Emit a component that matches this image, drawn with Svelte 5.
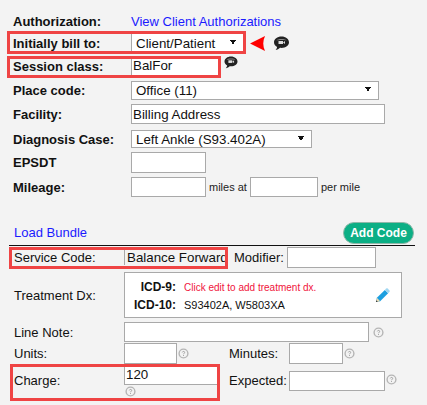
<script lang="ts">
  let initiallyBill = $state('Client/Patient');
  let placeCode = $state('Office (11)');
  let diagnosisCase = $state('Left Ankle (S93.402A)');
</script>

{#snippet help()}
  <svg class="help" viewBox="0 0 12 12" aria-hidden="true">
    <circle cx="6" cy="6" r="4.8" fill="#f3f3f3" stroke="#b5b5b5" stroke-width="1.5" />
    <path d="M4.7 4.8c.2-1.4 2.6-1.4 2.6 0 0 1-1.3 1-1.3 2" fill="none" stroke="#999" stroke-width="1" />
    <rect x="5.5" y="7.6" width="1" height="1" fill="#999" />
  </svg>
{/snippet}

{#snippet bubble(cls)}
  <svg class={cls} viewBox="0 0 16 15" aria-hidden="true">
    <path d="M8 .5C3.8.5.5 3 .5 6.300c0 2 1.200 3.700 3.100 4.700-.2 1.200-.8 2.300-1.600 3 1.800-.2 3.400-1 4.500-2.200.5.1 1 .1 1.500.1 4.200 0 7.500-2.500 7.500-5.600S12.200.5 8 .5z" fill="#222" />
    <path d="M3 4.500C4 2.500 12 2.500 13 4.500 11 3.700 5 3.700 3 4.500z" fill="#8a8a8a" />
    <rect x="5" y="5" width="4.500" height="3" fill="#ddd" />
    <path d="M9.500 6.500 11.500 5v3z" fill="#ddd" />
  </svg>
{/snippet}

<div class="page">
  <section class="top">
    <div class="row auth">
      <span class="label">Authorization:</span>
      <a href="#auth">View Client Authorizations</a>
    </div>

    <div class="row bill">
      <span class="label">Initially bill to:</span>
      <select class="sel-bill" bind:value={initiallyBill}>
        <option>Client/Patient</option>
      </select>
      <svg class="arrow" viewBox="0 0 17 16" aria-hidden="true">
        <path d="M0 8 16 0c-2.500 5-2.500 11 0 16z" fill="#f00" />
      </svg>
      {@render bubble('bubble-big')}
      <span class="mark mark-bill"></span>
    </div>

    <div class="row session">
      <span class="label">Session class:</span>
      <span class="value">BalFor</span>
      {@render bubble('bubble-small')}
      <span class="mark mark-session"></span>
    </div>

    <div class="row place">
      <span class="label">Place code:</span>
      <select class="sel-place" bind:value={placeCode}>
        <option>Office (11)</option>
      </select>
    </div>

    <div class="row facility">
      <span class="label">Facility:</span>
      <input class="in-facility" value="Billing Address" />
    </div>

    <div class="row diagnosis">
      <span class="label">Diagnosis Case:</span>
      <select class="sel-diagnosis" bind:value={diagnosisCase}>
        <option>Left Ankle (S93.402A)</option>
      </select>
    </div>

    <div class="row epsdt">
      <span class="label">EPSDT</span>
      <input class="in-short" />
    </div>

    <div class="row mileage">
      <span class="label">Mileage:</span>
      <input class="in-short" />
      <span class="small">miles at</span>
      <input class="in-rate" />
      <span class="small">per mile</span>
    </div>
  </section>

  <div class="bundle">
    <a href="#bundle">Load Bundle</a>
    <button type="button">Add Code</button>
  </div>

  <section class="lines">
    <div class="line service">
      <span class="name">Service Code:</span>
      <span class="code">Balance Forward</span>
      <span class="modifier">Modifier:</span>
      <input class="in-modifier" />
      <span class="mark mark-service"></span>
    </div>

    <div class="line dx">
      <span class="name">Treatment Dx:</span>
      <div class="dx-box">
        <div class="dx-row">
          <b>ICD-9:</b>
          <span class="dx-warn">Click edit to add treatment dx.</span>
        </div>
        <div class="dx-row">
          <b>ICD-10:</b>
          <span class="dx-codes">S93402A, W5803XA</span>
        </div>
        <svg class="pencil" viewBox="0 0 16 16" aria-hidden="true">
          <path d="M1 15l1-4.500L10.500 2 14 5.500 5.500 14z" fill="#1c9fe0" />
          <path d="M10.500 2 12 .6c.5-.4 1-.4 1.500 0l2 2c.4.5.4 1 0 1.500L14 5.500z" fill="#9fd6f2" />
          <path d="M1 15l1-4.500L5.500 14z" fill="#edd9b0" />
          <path d="M1 15l.4-2L3 14.600z" fill="#333" />
        </svg>
      </div>
    </div>

    <div class="line note">
      <span class="name">Line Note:</span>
      <input class="in-note" />
      {@render help()}
    </div>

    <div class="line units">
      <span class="name">Units:</span>
      <input class="in-units" />
      {@render help()}
      <span class="side">Minutes:</span>
      <input class="in-minutes" />
      {@render help()}
    </div>

    <div class="line charge">
      <span class="name">Charge:</span>
      <div class="charge-field">
        <input class="in-charge" value="120" />
        {@render help()}
      </div>
      <span class="side">Expected:</span>
      <input class="in-expected" />
      {@render help()}
      <span class="mark mark-charge"></span>
    </div>
  </section>
</div>

<style>
  :global(body) {
    margin: 0;
    background: #f3f3f3;
  }

  .page {
    width: 427px;
    height: 405px;
    overflow: hidden;
    box-sizing: border-box;
    padding-top: 11px;
    background: #f3f3f3;
    font-family: "Liberation Sans", Arial, sans-serif;
    font-size: 13px;
    color: #111;
  }

  a {
    color: #1a1aff;
    text-decoration: none;
  }

  input,
  select {
    box-sizing: border-box;
    margin: 0;
    border: 1px solid #a9a9a9;
    border-radius: 0;
    background: #fff;
    font-family: inherit;
    font-size: 13.33px;
    color: #111;
    outline: none;
  }

  input {
    padding: 0 1px;
  }

  select {
    padding: 0 0 0 4px;
    appearance: none;
    background-image: linear-gradient(to top right, transparent 50%, #111 50%), linear-gradient(to top left, transparent 50%, #111 50%);
    background-repeat: no-repeat;
    background-size: 3px 5px;
    background-position: right 10px top calc(50% - 1px), right 7px top calc(50% - 1px);
  }

  .top {
    padding-left: 13px;
  }

  .row {
    position: relative;
    display: flex;
    align-items: center;
  }

  .label {
    flex: 0 0 118px;
    font-weight: 700;
  }

  .mark {
    position: absolute;
    box-sizing: border-box;
    border: 3px solid #ef4444;
    pointer-events: none;
  }

  .auth { height: 20px; }
  .bill { height: 20px; margin-top: 2px; }
  .session { box-sizing: border-box; height: 20px; margin-top: 5px; padding-bottom: 3px; }
  .place { height: 19px; margin-top: 3px; }
  .facility { height: 20px; margin-top: 4px; }
  .diagnosis { height: 18px; margin-top: 6px; }
  .epsdt { height: 21px; margin-top: 4px; }
  .mileage { height: 20px; margin-top: 4px; }

  .sel-bill { width: 112px; height: 20px; border-width: 0 0 0 1px; }
  .sel-place { width: 248px; height: 19px; }
  .sel-diagnosis { width: 181px; height: 18px; }
  .in-facility { width: 254px; height: 20px; }
  .in-short { width: 75px; height: 100%; }
  .in-rate { width: 68px; height: 100%; }

  .value {
    box-sizing: border-box;
    width: 88px;
    height: 19px;
    padding-left: 1px;
    border-left: 1px solid #a9a9a9;
    background: #fff;
    font-size: 13.33px;
    line-height: 17px;
  }

  .small {
    margin: 0 3px;
    font-size: 11px;
    color: #222;
  }

  .arrow {
    width: 16px;
    height: 15px;
    margin-left: 7px;
  }

  .bubble-big {
    width: 17px;
    height: 15px;
    margin-left: 7px;
  }

  .bubble-small {
    width: 14px;
    height: 13px;
    margin: -8px 0 0 5px;
  }

  .mark-bill { left: -6px; top: -2px; width: 239px; height: 23px; }
  .mark-session { left: -6px; top: -2px; width: 214px; height: 22px; }

  .bundle {
    display: flex;
    align-items: center;
    justify-content: space-between;
    height: 23px;
    margin-top: 24px;
    padding: 0 13px 0 14px;
    color: #1a1aff;
  }

  .bundle button {
    width: 71px;
    height: 22px;
    padding: 0;
    border: 1px solid #8fb8a9;
    border-radius: 11px;
    background: #0caf85;
    font-family: inherit;
    font-size: 12px;
    font-weight: 700;
    color: #fff;
  }

  .lines {
    margin: 1px 12px 0 9px;
    padding-left: 5px;
    border-top: 1px solid #111;
  }

  .line {
    position: relative;
    display: flex;
    align-items: center;
  }

  .name {
    flex: 0 0 110px;
  }

  .side {
    flex: 0 0 60px;
    margin-left: 40px;
  }

  .help {
    width: 11px;
    height: 11px;
    margin-left: 1px;
    flex: none;
  }

  .note .help { margin-left: 4px; }

  .service { height: 21px; margin-top: 1px; }
  .dx { height: 46px; margin-top: 4px; }
  .note { height: 20px; margin-top: 4px; }
  .units { height: 21px; margin-top: 1px; }
  .charge { height: 33px; margin-top: 1px; align-items: flex-start; }

  .code {
    flex: none;
    width: 110px;
    box-sizing: border-box;
    padding-left: 2px;
    border-left: 1px solid #a9a9a9;
    font-size: 13.33px;
    white-space: nowrap;
  }

  .modifier { margin-left: 0; }
  .in-modifier { width: 89px; height: 21px; margin-left: 3px; }

  .dx-box {
    position: relative;
    box-sizing: border-box;
    width: 278px;
    height: 46px;
    border: 1px solid #a9a9a9;
    background: #fff;
    padding-top: 5px;
  }

  .dx-row {
    display: flex;
    align-items: center;
    height: 18px;
  }

  .dx-row b {
    flex: 0 0 51px;
    text-align: right;
    font-size: 12px;
  }

  .dx-warn {
    margin-left: 8px;
    font-size: 10px;
    color: #f0143c;
  }

  .dx-codes {
    margin-left: 8px;
    font-size: 11px;
  }

  .pencil {
    position: absolute;
    right: 11px;
    top: 15px;
    width: 15px;
    height: 15px;
  }

  .in-note { width: 245px; height: 20px; }
  .in-units { width: 53px; height: 21px; }
  .in-minutes { width: 54px; height: 21px; }

  .charge .name { margin-top: 8px; }
  .charge .side { margin-top: 8px; margin-left: 8px; }
  .charge > .help { margin-top: 9px; }

  .charge-field {
    display: flex;
    flex-direction: column;
    width: 97px;
  }

  .charge-field .help { margin: 1px 0 0 1px; }

  .in-charge {
    width: 96px;
    height: 20px;
    border-width: 0 0 1px 1px;
    padding: 0 1px;
  }

  .in-expected { width: 96px; height: 20px; margin-top: 6px; }

  .mark-charge { left: -4px; top: -1px; width: 210px; height: 37px; }
  .mark-service { left: -5px; top: 0; width: 219px; height: 22px; }
</style>
